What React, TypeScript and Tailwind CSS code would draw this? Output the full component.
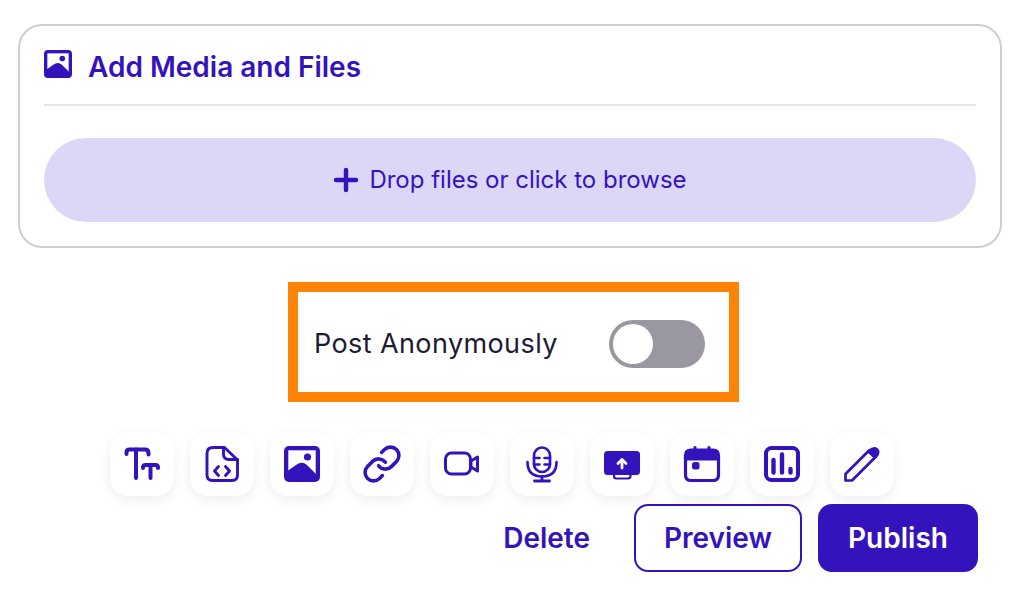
import React from "react";

const C = "#3413bd";

function Ico({ children }: { children: React.ReactNode }) {
  return (
    <svg width="36" height="36" viewBox="0 0 36 36" fill="none" stroke={C} strokeWidth="3" strokeLinecap="round" strokeLinejoin="round" overflow="visible">
      {children}
    </svg>
  );
}

function ImageGlyph() {
  return (
    <>
      <rect x="0" y="0" width="36" height="36" rx="5" fill={C} stroke="none" />
      <rect x="4.3" y="4.3" width="27.4" height="27.4" fill="#fff" stroke="none" />
      <path d="M2 26 L12 19 Q18 14.5 23 19 L34 30 V34 H2 Z" fill={C} stroke="none" />
      <circle cx="23.5" cy="11" r="3.6" fill={C} stroke="none" />
    </>
  );
}

const icons: React.ReactNode[] = [
  <Ico key="t">
    <path d="M2.5 8 V6.5 Q2.5 3.5 5.5 3.5 H21 Q24.5 3.5 24.5 7 V8.5" strokeWidth="4" />
    <path d="M12 3.5 V32" strokeWidth="4" />
    <path d="M19 22 V21.5 Q19 19 21.5 19 H31.5 Q34 19 34 21.5 V22" strokeWidth="4" />
    <path d="M26.5 19 V32" strokeWidth="4" />
  </Ico>,
  <Ico key="f">
    <path d="M9 1.5 H20.5 L33.5 14 V29 Q33.5 34.5 28 34.5 H8.5 Q3 34.5 3 29 V7.5 Q3 1.5 9 1.5 Z" strokeWidth="2.9" />
    <path d="M19.5 1.5 V8 Q19.5 13.5 25 13.5 H33.5" strokeWidth="2.9" />
    <path d="M14.5 20.5 L10.5 25 L14.5 29.5" strokeWidth="2.9" />
    <path d="M21.5 20.5 L25.5 25 L21.5 29.5" strokeWidth="2.9" />
  </Ico>,
  <Ico key="i">
    <ImageGlyph />
  </Ico>,
  <Ico key="l">
    <g transform="translate(-2.4 -2.4) scale(1.7)" strokeWidth="2.1">
      <path d="M10 13a5 5 0 0 0 7.54.54l3-3a5 5 0 0 0-7.07-7.07l-1.72 1.71" />
      <path d="M14 11a5 5 0 0 0-7.54-.54l-3 3a5 5 0 0 0 7.07 7.07l1.71-1.71" />
    </g>
  </Ico>,
  <Ico key="v">
    <rect x="1.5" y="7" width="25" height="21" rx="6" strokeWidth="3" />
    <path d="M27 15 L33.5 11 V25 L27 21 Z" strokeWidth="3" />
  </Ico>,
  <Ico key="m">
    <rect x="10" y="1.5" width="16" height="24.5" rx="8" strokeWidth="2.7" />
    <path d="M10 12 H15.5 M20.5 12 H26 M10 18.5 H15.5 M20.5 18.5 H26" strokeWidth="2.6" />
    <path d="M3.5 16 Q3.5 30.5 18 30.5 Q32.5 30.5 32.5 16" strokeWidth="2.6" />
    <path d="M18 30.5 V35 M10.5 35 H25.5" strokeWidth="2.8" />
  </Ico>,
  <Ico key="s">
    <rect x="0" y="5" width="36" height="24" rx="3.5" fill={C} stroke="none" />
    <path d="M10 29 V30 Q10 32.5 12.5 32.5 H24 Q26.5 32.5 26.5 30 V29" strokeWidth="2.2" />
    <path d="M18 22 V14 M14 17.5 L18 13.5 L22 17.5" stroke="#fff" strokeWidth="2.8" />
  </Ico>,
  <Ico key="c">
    <path d="M7 4 H29 Q34.5 4 34.5 9.5 V13 H1.5 V9.5 Q1.5 4 7 4 Z" fill={C} strokeWidth="3.2" />
    <path d="M1.5 12 V29 Q1.5 34.5 7 34.5 H29 Q34.5 34.5 34.5 29 V12" strokeWidth="3.2" />
    <path d="M11 1.5 V4 M25 1.5 V4" strokeWidth="3.2" />
    <rect x="8" y="16" width="7.5" height="7.5" rx="2.5" fill={C} stroke="none" />
  </Ico>,
  <Ico key="b">
    <rect x="2" y="2" width="32" height="32" rx="5.5" strokeWidth="4" />
    <path d="M9.5 14 V26.5 M18 8.5 V26.5 M26.5 23 V26.5" strokeWidth="4.4" />
  </Ico>,
  <Ico key="p">
    <path d="M1.5 34.5 V28 L25 4.5 L31.5 11 L8 34.5 Z" strokeWidth="2.7" />
    <path d="M24.5 3.5 Q28 0.5 31.5 1 Q35.5 2.5 35.5 6 Q35.5 9 33 11.5 L30.5 13 L23 6 Z" fill={C} stroke="none" />
  </Ico>,
];

export default function App() {
  return (
    <div className="min-h-[600px] bg-white pl-[18px] pr-6 pt-6 font-['Inter',sans-serif]">
      <section className="h-[224px] rounded-[24px] border-2 border-[#cfcdd2] px-6 pt-6 pb-6">
        <div className="flex h-[56px] items-start gap-4 border-b-2 border-[#e5e4e8]">
          <svg width="28" height="28" viewBox="0 0 36 36" className="shrink-0" overflow="visible">
            <ImageGlyph />
          </svg>
          <h2 className="text-[28px] font-semibold leading-[34px] text-[#3413bd]">Add Media and Files</h2>
        </div>
        <div className="mt-8 flex h-[84px] items-center justify-center gap-[10px] rounded-[42px] bg-[#dcd7f6] text-[#3413bd]">
          <svg width="26" height="26" viewBox="0 0 26 26" fill="none" stroke={C} strokeWidth="4.4" strokeLinecap="round">
            <path d="M13 3 V23 M3 13 H23" />
          </svg>
          <span className="text-[24px]">Drop files or click to browse</span>
        </div>
      </section>

      <div className="mt-[34px] ml-[270px]">
        <div className="flex h-[120px] w-[451px] items-center border-[10px] border-[#ff8307] pl-4 pt-1">
          <span className="w-[242px] whitespace-nowrap text-[27px] tracking-[0.4px] text-[#1c1b33]">Post Anonymously</span>
          <span className="ml-[53px] flex h-12 w-24 items-center rounded-full bg-[#9a97a1] pl-1">
            <span className="h-10 w-10 rounded-full bg-white" />
          </span>
        </div>
      </div>

      <div className="mt-[30px] ml-[92px] flex gap-4">
        {icons.map((icon, i) => (
          <button key={i} className="flex h-16 w-16 items-center justify-center rounded-[18px] bg-white shadow-[0_4px_12px_rgba(30,20,60,0.07)]">
            {icon}
          </button>
        ))}
      </div>

      <div className="mt-2 mr-6 flex items-center justify-end gap-4 text-[28px] font-semibold">
        <button className="mr-7 text-[#3413bd]">Delete</button>
        <button className="flex h-[68px] w-[168px] items-center justify-center rounded-[14px] border-2 border-[#3413bd] text-[#3413bd]">Preview</button>
        <button className="flex h-[68px] w-[160px] items-center justify-center rounded-[14px] bg-[#3413bd] text-white">Publish</button>
      </div>
    </div>
  );
}
